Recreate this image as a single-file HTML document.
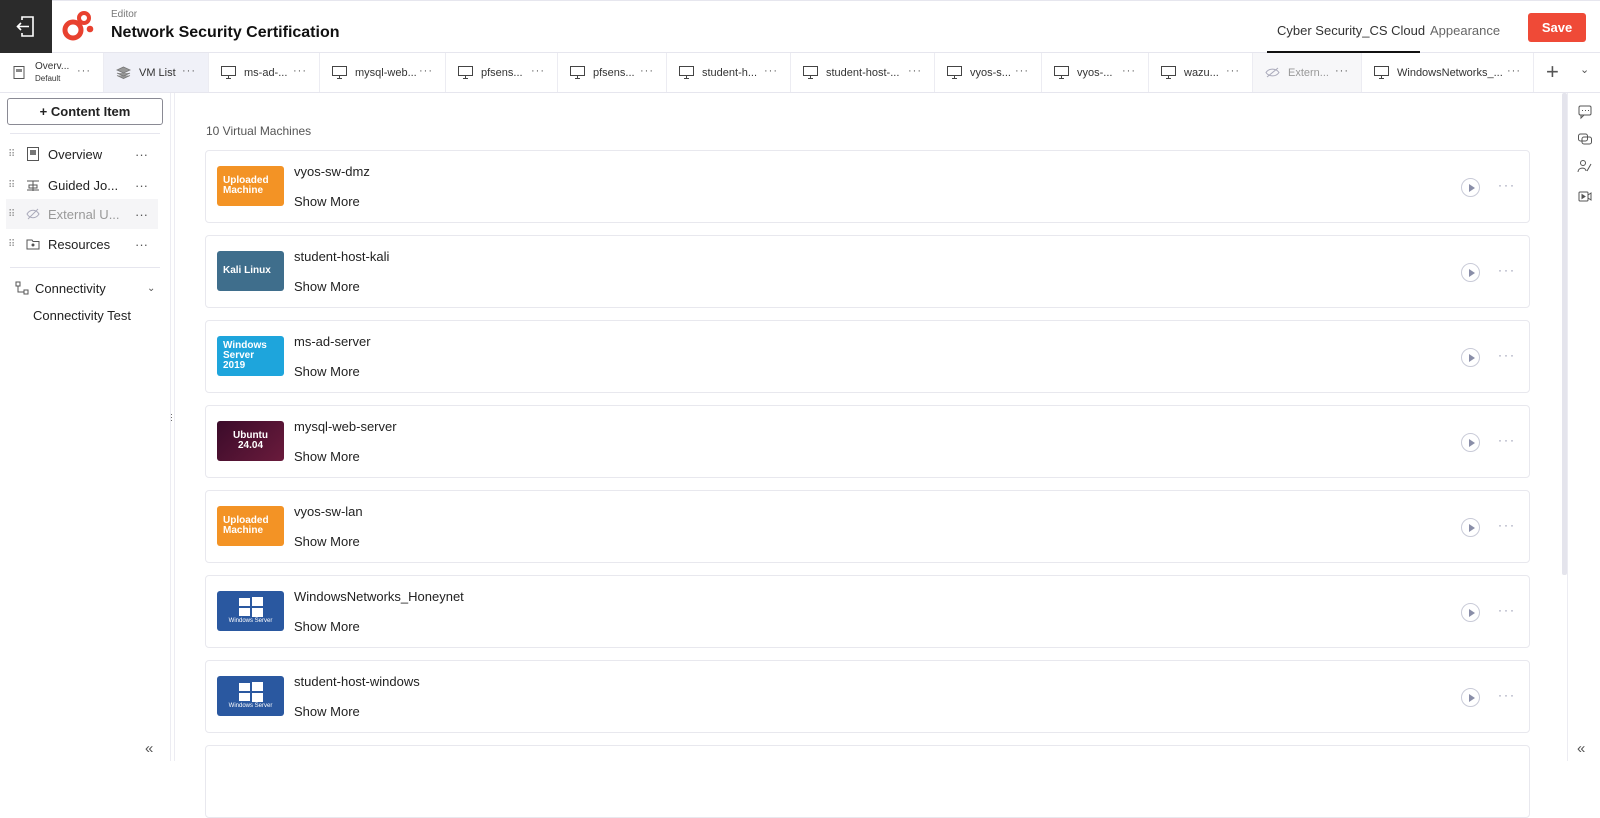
<!DOCTYPE html>
<html><head><meta charset="utf-8"><style>
*{box-sizing:border-box;margin:0;padding:0}
body{width:1600px;height:761px;overflow:hidden;font-family:"Liberation Sans",sans-serif;color:#222;background:#fff;position:relative}
.abs{position:absolute}
#hdr{left:0;top:0;width:1600px;height:53px;border-bottom:1px solid #e6e6ee;border-top:1px solid #e6e6ee}
#exit{left:0;top:0;width:52px;height:53px;background:#2b2b2b;color:#fff}
#tabs{left:0;top:53px;width:1600px;height:40px;border-bottom:1px solid #e6e6ee}
.tab{position:absolute;top:0;height:39px;border-right:1px solid #ececf2;font-size:11px;color:#333;display:flex;align-items:center;padding-left:12px;overflow:hidden;white-space:nowrap}
.tab .d{position:absolute;right:12px;top:12px;font-size:11px;color:#555;letter-spacing:1px}
.mon{width:15px;height:13px;margin-right:8px;flex:none}
#side{left:0;top:93px;width:170px;height:668px}
#gut{left:170px;top:93px;width:5px;height:668px;border-left:1px solid #ececf2;border-right:1px solid #ececf2}
.si{position:absolute;left:8px;width:150px;height:30px;font-size:13px;display:flex;align-items:center}
.card{position:absolute;left:205px;width:1325px;height:73px;border:1px solid #e8e8ee;border-radius:4px;background:#fff}
.th{position:absolute;left:11px;top:15px;width:67px;height:40px;border-radius:3px;color:#fff;font-weight:bold;font-size:10px;line-height:10px;display:flex;align-items:center;overflow:hidden}
.t1{position:absolute;left:88px;top:13px;font-size:13px;color:#222}
.t2{position:absolute;left:88px;top:43px;font-size:13px;color:#222}
.pl{position:absolute;left:1255px;top:27px;width:19px;height:19px;border:1px solid #c9cbd8;border-radius:50%}
.pl:after{content:"";position:absolute;left:7px;top:5px;border-left:6px solid #8a8ea8;border-top:4px solid transparent;border-bottom:4px solid transparent}
.dots{position:absolute;left:1292px;top:27px;font-size:12px;color:#8a8ea8;letter-spacing:2px}
</style></head><body>
<div id="hdr" class="abs"></div>
<div id="exit" class="abs"><svg width="52" height="53" viewBox="0 0 52 53"><path d="M22 20 V17 H33 V36 H22 V33" fill="none" stroke="#fff" stroke-width="1.6"/><path d="M29 26.5 H18 M21 23 L17.5 26.5 L21 30" fill="none" stroke="#fff" stroke-width="1.6"/></svg></div>
<svg class="abs" style="left:62px;top:10px" width="34" height="32" viewBox="0 0 34 32"><circle cx="11" cy="20" r="8" fill="none" stroke="#e8412f" stroke-width="5"/><circle cx="22" cy="8" r="5" fill="none" stroke="#e8412f" stroke-width="4"/><circle cx="28" cy="19" r="3.3" fill="#e8412f"/></svg>
<div class="abs" style="left:111px;top:9px;font-size:10px;color:#777">Editor</div>
<div class="abs" style="left:111px;top:24px;font-size:16px;font-weight:bold;color:#111">Network Security Certification</div>
<div class="abs" style="left:1277px;top:23px;font-size:13px;color:#333">Cyber Security_CS Cloud</div>
<div class="abs" style="left:1267px;top:51px;width:153px;height:2px;background:#111"></div>
<div class="abs" style="left:1430px;top:23px;font-size:13px;color:#666">Appearance</div>
<div class="abs" style="left:1528px;top:13px;width:58px;height:29px;background:#ef4a37;border-radius:3px;color:#fff;font-weight:bold;font-size:13px;text-align:center;line-height:29px">Save</div>

<div id="tabs" class="abs">
<div class="tab" style="left:0;width:104px"><svg class="mon" viewBox="0 0 15 13"><rect x="2" y="0.5" width="10" height="12" fill="none" stroke="#555"/><rect x="4" y="3" width="6" height="3" fill="#888"/></svg><div style="line-height:12px;font-size:10px">Overv...<br><span style="font-size:8px">Default</span></div><span class="d">···</span></div>
<div class="tab" style="left:104px;width:105px;background:#f0f1f8"><svg class="mon" viewBox="0 0 15 13"><path d="M7.5 1 L14 4 L7.5 7 L1 4Z M1 7 L7.5 10 L14 7 M1 9.5 L7.5 12.5 L14 9.5" fill="#999" stroke="#777" stroke-width=".8"/></svg>VM List<span class="d">···</span></div>
<div class="tab" style="left:209px;width:111px"><svg class="mon" viewBox="0 0 15 13"><rect x=".5" y=".5" width="14" height="9" fill="none" stroke="#444"/><path d="M5 12.5H10M7.5 10v2.5" stroke="#444"/></svg>ms-ad-...<span class="d">···</span></div>
<div class="tab" style="left:320px;width:126px"><svg class="mon" viewBox="0 0 15 13"><rect x=".5" y=".5" width="14" height="9" fill="none" stroke="#444"/><path d="M5 12.5H10M7.5 10v2.5" stroke="#444"/></svg>mysql-web...<span class="d">···</span></div>
<div class="tab" style="left:446px;width:112px"><svg class="mon" viewBox="0 0 15 13"><rect x=".5" y=".5" width="14" height="9" fill="none" stroke="#444"/><path d="M5 12.5H10M7.5 10v2.5" stroke="#444"/></svg>pfsens...<span class="d">···</span></div>
<div class="tab" style="left:558px;width:109px"><svg class="mon" viewBox="0 0 15 13"><rect x=".5" y=".5" width="14" height="9" fill="none" stroke="#444"/><path d="M5 12.5H10M7.5 10v2.5" stroke="#444"/></svg>pfsens...<span class="d">···</span></div>
<div class="tab" style="left:667px;width:124px"><svg class="mon" viewBox="0 0 15 13"><rect x=".5" y=".5" width="14" height="9" fill="none" stroke="#444"/><path d="M5 12.5H10M7.5 10v2.5" stroke="#444"/></svg>student-h...<span class="d">···</span></div>
<div class="tab" style="left:791px;width:144px"><svg class="mon" viewBox="0 0 15 13"><rect x=".5" y=".5" width="14" height="9" fill="none" stroke="#444"/><path d="M5 12.5H10M7.5 10v2.5" stroke="#444"/></svg>student-host-...<span class="d">···</span></div>
<div class="tab" style="left:935px;width:107px"><svg class="mon" viewBox="0 0 15 13"><rect x=".5" y=".5" width="14" height="9" fill="none" stroke="#444"/><path d="M5 12.5H10M7.5 10v2.5" stroke="#444"/></svg>vyos-s...<span class="d">···</span></div>
<div class="tab" style="left:1042px;width:107px"><svg class="mon" viewBox="0 0 15 13"><rect x=".5" y=".5" width="14" height="9" fill="none" stroke="#444"/><path d="M5 12.5H10M7.5 10v2.5" stroke="#444"/></svg>vyos-...<span class="d">···</span></div>
<div class="tab" style="left:1149px;width:104px"><svg class="mon" viewBox="0 0 15 13"><rect x=".5" y=".5" width="14" height="9" fill="none" stroke="#444"/><path d="M5 12.5H10M7.5 10v2.5" stroke="#444"/></svg>wazu...<span class="d">···</span></div>
<div class="tab" style="left:1253px;width:109px;background:#f7f7f9;color:#999"><svg class="mon" viewBox="0 0 15 13"><path d="M1 6.5C4 2 11 2 14 6.5 11 11 4 11 1 6.5Z M2 11 L13 2" fill="none" stroke="#aab"/></svg>Extern...<span class="d">···</span></div>
<div class="tab" style="left:1362px;width:172px"><svg class="mon" viewBox="0 0 15 13"><rect x=".5" y=".5" width="14" height="9" fill="none" stroke="#444"/><path d="M5 12.5H10M7.5 10v2.5" stroke="#444"/></svg>WindowsNetworks_...<span class="d">···</span></div>
<div class="abs" style="left:1546px;top:6px;font-size:22px;color:#555;font-weight:300">+</div>
<div class="abs" style="left:1580px;top:10px;font-size:11px;color:#555">⌄</div>
</div>

<div id="side" class="abs">
<div class="abs" style="left:7px;top:5px;width:156px;height:27px;border:1px solid #8a8a94;border-radius:3px;font-size:13px;font-weight:bold;text-align:center;line-height:25px">+ Content Item</div>
<div class="abs" style="left:10px;top:40px;width:150px;height:1px;background:#e6e6ee"></div>
<div class="si" style="top:46px"><span style="color:#999;font-size:10px;width:18px">⠿</span><svg width="14" height="14" style="margin-right:8px"><rect x="1.5" y=".5" width="11" height="13" fill="none" stroke="#555"/><rect x="4" y="3" width="6" height="5" fill="#777"/></svg>Overview<span class="abs" style="left:127px;color:#555">···</span></div>
<div class="si" style="top:77px"><span style="color:#999;font-size:10px;width:18px">⠿</span><svg width="14" height="14" style="margin-right:8px"><path d="M1 3H13M7 3V13M3 7H11V10H3Z M1 12H13" fill="none" stroke="#555"/></svg>Guided Jo...<span class="abs" style="left:127px;color:#555">···</span></div>
<div class="si" style="top:106px;background:#f5f5f7;left:6px;width:152px;padding-left:2px;color:#999"><span style="font-size:10px;width:18px">⠿</span><svg width="14" height="14" style="margin-right:8px"><path d="M1 7C4 2 10 2 13 7 10 12 4 12 1 7Z M2 12 L12 2" fill="none" stroke="#aab"/></svg>External U...<span class="abs" style="left:129px;color:#555">···</span></div>
<div class="si" style="top:136px"><span style="color:#999;font-size:10px;width:18px">⠿</span><svg width="14" height="14" style="margin-right:8px"><path d="M1 3H6L7 4.5H13V12H1Z" fill="none" stroke="#555"/><circle cx="7" cy="8" r="1.5" fill="#555"/></svg>Resources<span class="abs" style="left:127px;color:#555">···</span></div>
<div class="abs" style="left:10px;top:174px;width:150px;height:1px;background:#e6e6ee"></div>
<div class="si" style="top:180px;left:15px"><svg width="14" height="14" style="margin-right:6px"><rect x="1" y="1" width="4" height="4" fill="none" stroke="#555"/><rect x="9" y="9" width="4" height="4" fill="none" stroke="#555"/><path d="M3 5V11H9" fill="none" stroke="#555"/></svg>Connectivity<span class="abs" style="left:132px;color:#555;font-size:10px">⌄</span></div>
<div class="abs" style="left:33px;top:215px;font-size:13px">Connectivity Test</div>
<div class="abs" style="left:145px;top:647px;font-size:15px;color:#555">«</div>
</div>
<div id="gut" class="abs"><div class="abs" style="left:-1px;top:320px;font-size:9px;color:#555;line-height:3px">·<br>·<br>·</div></div>

<div class="abs" style="left:206px;top:124px;font-size:12px;color:#555">10 Virtual Machines</div>

<div class="card" style="top:150px"><div class="th" style="background:#f39325;padding-left:6px">Uploaded<br>Machine</div><div class="t1">vyos-sw-dmz</div><div class="t2">Show More</div><div class="pl"></div><div class="dots">···</div></div>
<div class="card" style="top:235px"><div class="th" style="background:#3f6e8c;padding-left:6px">Kali Linux</div><div class="t1">student-host-kali</div><div class="t2">Show More</div><div class="pl"></div><div class="dots">···</div></div>
<div class="card" style="top:320px"><div class="th" style="background:#1ea5dc;padding-left:6px">Windows<br>Server<br>2019</div><div class="t1">ms-ad-server</div><div class="t2">Show More</div><div class="pl"></div><div class="dots">···</div></div>
<div class="card" style="top:405px"><div class="th" style="background:linear-gradient(135deg,#3b0b2a,#6a1b3c);justify-content:center;text-align:center">Ubuntu<br>24.04</div><div class="t1">mysql-web-server</div><div class="t2">Show More</div><div class="pl"></div><div class="dots">···</div></div>
<div class="card" style="top:490px"><div class="th" style="background:#f39325;padding-left:6px">Uploaded<br>Machine</div><div class="t1">vyos-sw-lan</div><div class="t2">Show More</div><div class="pl"></div><div class="dots">···</div></div>
<div class="card" style="top:575px"><div class="th" style="background:#2a58a0;flex-direction:column;justify-content:center"><svg width="24" height="20"><rect x="0" y="1" width="11" height="8" fill="#fff"/><rect x="13" y="0" width="11" height="9" fill="#fff"/><rect x="0" y="11" width="11" height="8" fill="#fff"/><rect x="13" y="11" width="11" height="9" fill="#fff"/></svg><span style="font-size:6px;font-weight:normal;line-height:8px">Windows Server</span></div><div class="t1">WindowsNetworks_Honeynet</div><div class="t2">Show More</div><div class="pl"></div><div class="dots">···</div></div>
<div class="card" style="top:660px"><div class="th" style="background:#2a58a0;flex-direction:column;justify-content:center"><svg width="24" height="20"><rect x="0" y="1" width="11" height="8" fill="#fff"/><rect x="13" y="0" width="11" height="9" fill="#fff"/><rect x="0" y="11" width="11" height="8" fill="#fff"/><rect x="13" y="11" width="11" height="9" fill="#fff"/></svg><span style="font-size:6px;font-weight:normal;line-height:8px">Windows Server</span></div><div class="t1">student-host-windows</div><div class="t2">Show More</div><div class="pl"></div><div class="dots">···</div></div>
<div class="card" style="top:745px"></div>

<div class="abs" style="left:1562px;top:93px;width:5px;height:482px;background:#e4e4ec;border-radius:2px"></div>
<div class="abs" style="left:1567px;top:93px;width:1px;height:668px;background:#ececf2"></div>
<svg class="abs" style="left:1577px;top:104px" width="16" height="100" viewBox="0 0 16 100"><g fill="none" stroke="#555" stroke-width="1"><rect x="2" y="2" width="12" height="9" rx="1.5"/><path d="M4 11 L4 14 L7 11"/><path d="M5 6.5h1M8 6.5h1M11 6.5h1"/><rect x="1.5" y="30" width="9" height="7" rx="2"/><rect x="5" y="33" width="9.5" height="7" rx="2"/><circle cx="6" cy="59" r="2.5"/><path d="M1 68 C1 63 9 63 9 67 M10 67 L14 60"/><rect x="2" y="88" width="9" height="9" rx="1"/><path d="M11 91 L14 89 V96 L11 94"/><path d="M5 90.5 L8 92.5 L5 94.5Z" fill="#555"/></g></svg>
<div class="abs" style="left:1577px;top:740px;font-size:15px;color:#555">«</div>
</body></html>
